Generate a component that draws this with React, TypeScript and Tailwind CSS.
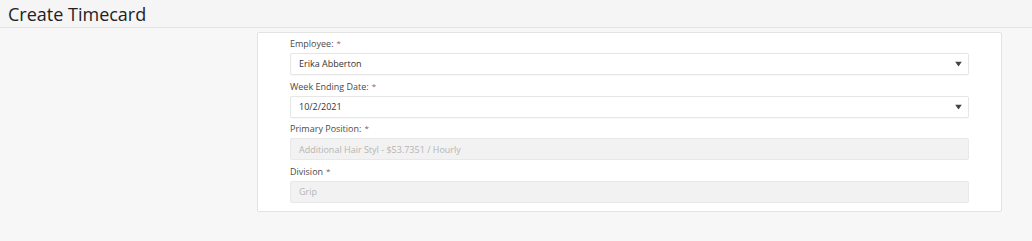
import React from 'react';

const Label = ({ text, red }: { text: string; red?: boolean }) => (
  <label className="flex items-start gap-[3px] text-[9px] font-medium text-[#4a4a4a] mb-[3px] leading-[12px]">
    {text}
    <span className={`text-[8px] leading-[10px] ${red ? 'text-[#a05a5a]' : 'text-[#666]'}`}>*</span>
  </label>
);

const SelectField = ({ label, value }: { label: string; value: string }) => (
  <div>
    <Label text={label} red />
    <div className="relative h-[22px] border border-[#e6e6e6] rounded-[2px] bg-white flex items-center pl-[8px] text-[9px] text-[#333] shadow-[0_1px_1px_rgba(0,0,0,0.03)]">
      {value}
      <svg className="absolute right-[6px] top-1/2 -translate-y-1/2" width="7" height="5" viewBox="0 0 7 5">
        <path d="M0 0 H7 L3.5 5 Z" fill="#444" />
      </svg>
    </div>
  </div>
);

const DisabledField = ({ label, value }: { label: string; value: string }) => (
  <div>
    <Label text={label} />
    <div className="h-[22px] border border-[#e8e8e8] rounded-[2px] bg-[#f2f2f2] flex items-center pl-[8px] text-[9px] text-[#b5b5b5]">
      {value}
    </div>
  </div>
);

export default function App() {
  return (
    <div className="min-h-[241px] bg-[#f7f7f7]" style={{ fontFamily: '"Open Sans", sans-serif' }}>
      {/* Header */}
      <div className="h-[28px] bg-[#f5f5f5] border-b border-[#e3e3e3] flex items-center pl-[8px]">
        <h1 className="text-[18px] text-[#222] leading-none">Create Timecard</h1>
      </div>

      {/* Form card */}
      <div className="pl-[257px] pr-[30px] pt-[4px]">
        <div className="bg-white border border-[#e3e3e3] rounded-[2px] px-[32px] pt-[5px] pb-[8px] flex flex-col gap-[5.7px]">
          <SelectField label="Employee:" value="Erika Abberton" />
          <SelectField label="Week Ending Date:" value="10/2/2021" />
          <DisabledField label="Primary Position:" value="Additional Hair Styl - $53.7351 / Hourly" />
          <DisabledField label="Division" value="Grip" />
        </div>
      </div>
    </div>
  );
}
